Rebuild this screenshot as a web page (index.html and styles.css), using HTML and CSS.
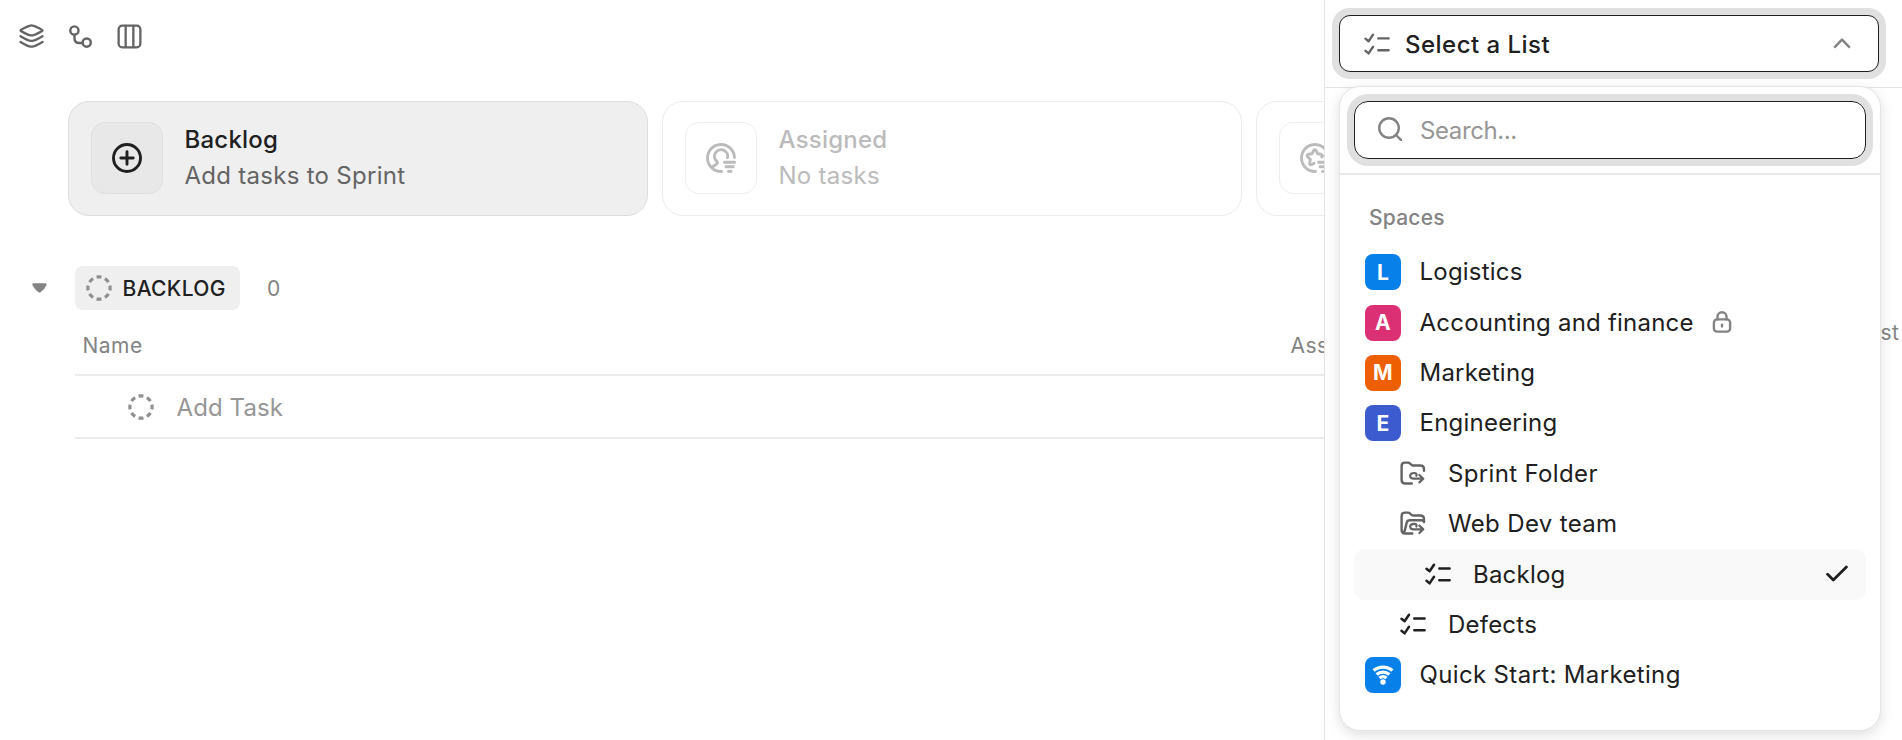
FILE: index.html
```html
<!DOCTYPE html>
<html lang="en">
<head>
<meta charset="utf-8">
<title>Backlog</title>
<link rel="stylesheet" href="styles.css">
</head>
<body>
<svg class="defs" width="0" height="0">
  <symbol id="list" viewBox="0 0 26 22"><path d="M1.500 5.700l3.100 2.600L9 1.700M1.500 17.800l3.100 2.600L9 13.800M14.300 5.400h10.300M14.300 17.200h10.300"/></symbol>
  <symbol id="dashed" viewBox="0 0 26 26"><circle cx="13" cy="13" r="11.100" pathLength="80" stroke-dasharray="5.800 4.200" stroke-dashoffset="2.900"/></symbol>
</svg>
<div class="app">
  <main class="board">
    <div class="toolbar">
      <svg width="25" height="25" viewBox="0 0 26 26"><path d="M2 7.300C1.500 6.900 1.500 6.400 2 6.100C5.500 4 9 2.200 12 1.600Q13 1.400 14 1.600C17 2.200 20.500 4 24 6.100C24.500 6.400 24.500 6.900 24 7.300C20.500 9.400 17 11.200 14 11.800Q13 12 12 11.800C9 11.200 5.500 9.400 2 7.300zM1.600 12.700C5 14.800 9 16.900 12 17.500Q13 17.700 14 17.500C17 16.900 21 14.800 24.400 12.700M1.600 18.700C5 20.800 9 22.900 12 23.500Q13 23.700 14 23.500C17 22.900 21 20.800 24.400 18.700"/></svg>
      <svg width="24" height="24" viewBox="0 0 24 24"><circle cx="5.400" cy="5.500" r="4.100"/><circle cx="17.700" cy="17.600" r="4.100"/><path d="M5.500 9.800v3.400q0 4.800 4.800 4.800h3.200"/></svg>
      <svg width="25" height="25" viewBox="0 0 26 26"><rect x="1.700" y="1.700" width="22.600" height="22.600" rx="3.800"/><path d="M9 2v22M17 2v22"/></svg>
    </div>
    <div class="cards">
      <section class="card active">
        <div class="tile"><svg width="30" height="30" viewBox="0 0 30 30"><circle cx="15" cy="15" r="13.500"/><path d="M15 8.800v12.400M8.800 15h12.400"/></svg></div>
        <div class="copy"><h3>Backlog</h3><p>Add tasks to Sprint</p></div>
      </section>
      <section class="card">
        <div class="tile"><svg width="30" height="30" viewBox="0 0 30 30"><path d="M28.500 14.500A13.500 13.500 0 1 0 15.500 28.500M6.500 24l4.200-3.200q1.400-1.100.2-2.300A6.600 6.600 0 1 1 21.500 14.800M18.500 19.200h10M20 23.800h7.300M22.500 28.400h2.600"/></svg></div>
        <div class="copy"><h3>Assigned</h3><p>No tasks</p></div>
      </section>
      <section class="card">
        <div class="tile"><svg width="30" height="30" viewBox="0 0 30 30"><path d="M28.500 14.500A13.500 13.500 0 1 0 15.500 28.500M14 20.300l-2 1.200q-2.600 1-2.300-1.800l.6-3.300-2.400-2.400q-1.900-2.200.8-2.700l3.200-.5 1.500-3q1.300-2.300 2.800 0l1.500 3 3.200.5q2.600.6.9 2.700M18.500 19.200h10M20 23.800h7.300M22.500 28.400h2.600"/></svg></div>
      </section>
    </div>
    <div class="group">
      <svg class="caret" width="15" height="10" viewBox="0 0 15 10"><path d="M1.200.2h12.600q1.200.4.8 1.800Q12.500 6.500 8.500 9.300q-1 .6-2 0Q2.500 6.500.4 2 0 .6 1.200.2z"/></svg>
      <span class="status"><svg class="ring" width="26" height="26"><use href="#dashed"/></svg><span class="status-name">BACKLOG</span></span>
      <span class="count">0</span>
    </div>
    <div class="table">
      <div class="thead"><span class="name">Name</span><span>Assignee</span></div>
      <div class="addrow"><svg class="ring" width="26" height="26"><use href="#dashed"/></svg><span>Add Task</span></div>
    </div>
  </main>
  <aside class="panel">
    <header class="picker">
      <button class="select" type="button">
        <svg class="listicon" width="26" height="22"><use href="#list"/></svg>
        <span class="select-label">Select a List</span>
        <svg class="chev" width="18" height="11" viewBox="0 0 18 11"><path d="M1.200 9.700L9 1.600l7.800 8.100"/></svg>
      </button>
    </header>
    <div class="behind">st</div>
    <div class="dropdown">
      <div class="searchbar">
        <div class="search">
          <svg width="24" height="24" viewBox="0 0 24 24"><circle cx="11" cy="11" r="9.800"/><path d="M18 18l5.200 5.200"/></svg>
          <span>Search...</span>
        </div>
      </div>
      <div class="heading">Spaces</div>
      <ul class="tree">
        <li><b class="badge blue">L</b><span>Logistics</span></li>
        <li><b class="badge pink">A</b><span>Accounting and finance</span>
          <svg class="lock" width="20" height="22" viewBox="0 0 20 22"><rect x="1.900" y="8.400" width="16.200" height="12.200" rx="3.200"/><path d="M5.500 8.400V5.700a4.500 4.500 0 0 1 9 0v2.700M10 13.600v1.800"/></svg></li>
        <li><b class="badge orange">M</b><span>Marketing</span></li>
        <li><b class="badge indigo">E</b><span>Engineering</span></li>
        <li class="l1"><svg class="folder" width="26" height="24" viewBox="0 0 26 24"><path d="M11.800 22.500H5.200q-3.600 0-3.600-3.600V5q0-3.400 3.400-3.400h2.800q1.500 0 2.500 1.100l1 1.100q.6.700 1.600.7h7.500q3.600 0 3.600 3.600v1.700"/><path class="arrow" d="M16.400 14.800q.8-2.800-2.200-2.800-4 0-4 3 0 2.700 3.600 2.700h9.400M19.400 14l3.900 3.700-3.900 3.700"/></svg><span class="wide">Sprint Folder</span></li>
        <li class="l1"><svg class="folder" width="26" height="24" viewBox="0 0 26 24"><path d="M12.300 22.500H5.200q-3.600 0-3.600-3.600V5q0-3.400 3.400-3.400h2.800q1.500 0 2.500 1.100l1 1.100q.6.700 1.600.7h7.500q3.600 0 3.600 3.600v3q-.3-1.900-2.600-1.900H10q-2.800 0-3.300 2.400L4.800 19.500q-.5 2-2.400 1.400"/><path class="arrow" d="M16.400 15.500q.8-2.600-2.200-2.600-4 0-4 2.800 0 2.600 3.600 2.600h9.400M19.400 14.600l3.900 3.700-3.900 3.700"/></svg><span class="wide">Web Dev team</span></li>
        <li class="l2 selected"><svg class="listicon" width="26" height="22"><use href="#list"/></svg><span>Backlog</span>
          <svg class="check" width="22" height="17" viewBox="0 0 22 17"><path d="M1.600 9.300l5.700 5.600L20.400 2"/></svg></li>
        <li class="l1"><svg class="listicon" width="26" height="22"><use href="#list"/></svg><span>Defects</span></li>
        <li><b class="badge blue"><svg width="22" height="20" viewBox="0 0 22 20"><path d="M1.600 5.600A14.200 14.200 0 0 1 20.400 5.600M4.600 9.500A9.800 9.800 0 0 1 17.400 9.500M7.500 13.100A5.500 5.500 0 0 1 14.500 13.100"/><circle cx="11" cy="17" r="2.700"/></svg></b><span class="wide">Quick Start: Marketing</span></li>
      </ul>
    </div>
  </aside>
</div>
</body>
</html>
```
FILE: styles.css
```css
* { box-sizing: border-box; }
body { margin: 0; background: #fff; font-family: Inter, "Liberation Sans", sans-serif; color: #202020; font-size: 24px; letter-spacing: .22px; }
h3, p, ul { margin: 0; padding: 0; font: inherit; }
svg { display: block; flex: none; fill: none; stroke: currentColor; stroke-width: 2.4; stroke-linecap: round; stroke-linejoin: round; }
.defs { position: absolute; }
.app { display: flex; width: 1902px; height: 740px; overflow: hidden; }

.board { width: 1324px; height: 740px; overflow: hidden; flex: none; }
.toolbar { display: flex; height: 101px; padding: 24px 0 0 19px; color: #646464; }
.toolbar svg:nth-child(2) { margin: 1px 24px 0 25px; }
.cards { display: flex; gap: 14px; padding-left: 68px; width: 1850px; }
.card { display: flex; flex: none; width: 580px; height: 115px; padding: 20px 22px; border: 1px solid #ececec; border-radius: 21px; color: #bbb; }
.card.active { background: #efefef; border-color: #dedede; color: #202020; }
.tile { display: grid; place-items: center; width: 72px; height: 72px; border: 1px solid #eee; border-radius: 14px; flex: none; }
.active .tile { background: #e8e8e8; border-color: #dfdfdf; }
.tile svg { stroke-width: 2.9; }
.copy { padding: 0 0 0 21.5px; line-height: 36px; white-space: nowrap; }
.copy h3 { font-weight: 500; }
.copy p { letter-spacing: .28px; }
.active p { color: #646464; }

.group { display: flex; align-items: center; height: 44px; margin-top: 50px; padding-left: 32px; color: #838383; font-size: 21px; }
.caret { fill: currentColor; stroke: none; }
.status { display: flex; align-items: center; width: 165px; height: 44px; margin-left: 28px; padding-left: 10.5px; gap: 11px; background: #efefef; border-radius: 8px; }
.ring { color: #909090; stroke-linecap: butt; stroke-width: 3.2; }
.status-name { color: #202020; font-weight: 500; letter-spacing: .35px; }
.count { margin-left: 27px; }
.table { margin-left: 75px; color: #838383; }
.thead { display: flex; height: 66px; padding-left: 7.5px; border-bottom: 2px solid #ececec; font-size: 21px; line-height: 71px; letter-spacing: .5px; }
.name { width: 1208px; flex: none; }
.addrow { display: flex; align-items: center; gap: 23px; height: 63px; padding: 1px 0 0 52.5px; border-bottom: 2px solid #ececec; color: #969696; letter-spacing: .1px; }

.panel { position: relative; flex: 1; border-left: 1px solid #e4e4e4; background: #fff; }
.picker { height: 88px; padding: 15px 0 0 14px; border-bottom: 1px solid #e4e4e4; }
.select { display: flex; align-items: center; width: 540px; height: 57px; padding: 0 27px 0 24px; border: 1px solid #202020; border-radius: 11px; background: #fff; box-shadow: 0 0 0 7px #e0e0e0; font: 500 24px Inter, sans-serif; letter-spacing: .48px; color: #202020; }
.select .listicon { color: #646464; }
.select-label { margin: 1px auto 0 15px; }
.chev { color: #838383; stroke-linecap: butt; margin-top: -1px; }
.behind { padding: 232px 3px 0 0; text-align: right; font-size: 21px; line-height: 26px; color: #838383; }

.dropdown { position: absolute; left: 14px; top: 86px; width: 542px; height: 645px; border: 1px solid #e4e4e4; border-radius: 21px; background: #fff; box-shadow: 0 4px 14px rgba(0,0,0,.13); }
.searchbar { height: 88px; padding: 14px 14px 0; border-bottom: 2px solid #e8e8e8; }
.search { display: flex; align-items: center; height: 58px; padding-left: 23px; gap: 18px; border: 1px solid #202020; border-radius: 14px; box-shadow: 0 0 0 7px #e0e0e0; color: #969696; letter-spacing: -.4px; }
.search svg { color: #838383; margin-top: -2px; }
.heading { height: 72px; padding: 29px 0 0 29px; font-size: 21px; line-height: 28px; font-weight: 500; color: #838383; }
.tree { display: flex; flex-direction: column; padding: 0 14px; list-style: none; }
.tree li { display: flex; align-items: center; height: 50.4px; padding-left: 11px; gap: 18.5px; white-space: nowrap; }
.tree span { margin-top: -1px; }
.tree .l1 { padding-left: 45.5px; gap: 22.5px; }
.tree .l2 { padding-left: 70.5px; gap: 22.5px; }
.tree .wide { letter-spacing: .35px; }
.tree .selected { padding-right: 18px; background: #f9f9f9; border-radius: 11px; }
.check { margin-left: auto; margin-top: -2px; stroke-width: 2.8; }
.tree .listicon { stroke-width: 2.5; margin-top: -2px; }
.badge { display: grid; place-items: center; width: 36px; height: 36px; border-radius: 8px; color: #fff; font-size: 21px; font-weight: 700; flex: none; }
.badge svg { stroke-width: 3.3; stroke-linecap: butt; }
.badge circle { fill: #fff; stroke: none; }
.blue { background: #0880ea; }
.pink { background: #dc3075; }
.orange { background: #ed5f00; }
.indigo { background: #3b5bcf; }
.folder { color: #646464; margin-top: -2px; }
.folder .arrow { stroke-width: 2.2; }
.lock { color: #838383; margin: -2px 0 0 0; }
```
